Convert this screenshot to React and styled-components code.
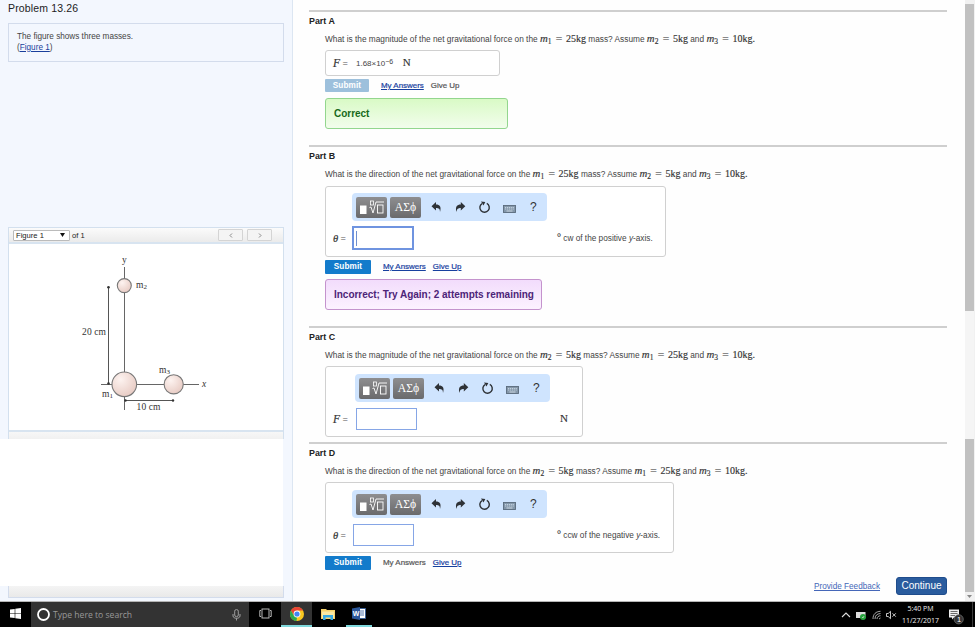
import React from "react";
import styled, { createGlobalStyle } from "styled-components";

const GlobalStyle = createGlobalStyle`
  * {
    box-sizing: border-box;
  }

  body {
    margin: 0;
    overflow: hidden;
    background: white;
    font-family: "Liberation Sans", Arial, sans-serif;
    color: #444;
  }
`

const Screen = styled.div`
  display: flex;
  flex-direction: column;
  width: 975px;
  height: 627px;
`

const Page = styled.div`
  display: flex;
  height: 602px;
  border-bottom: 1px solid #b5b5b5;
`

const Sidebar = styled.div`
  display: flex;
  flex-direction: column;
  width: 293px;
  background: #f3f7fe;
  border-right: 1px solid #dce6f2;
`

const ProblemTitle = styled.div`
  height: 23px;
  padding-left: 8px;
  font-size: 10.5px;
  line-height: 16px;
  letter-spacing: 0.15px;
  color: #222;
`

const Intro = styled.div`
  width: 276px;
  height: 39px;
  margin-left: 8px;
  padding: 8px 0 0 8px;
  border: 1px solid #d3dcec;
  font-size: 8.2px;
  line-height: 10.5px;
`

const Link = styled.a`
  color: ${props => props.$color || "#1a3f9c"};
  text-decoration: underline;
`

const Figure = styled.div`
  width: 276px;
  height: 212px;
  margin: 165px 0 0 8px;
  border: 1px solid #d3e0ee;
  border-bottom: none;
  background: white;
`

const FigureBar = styled.div`
  display: flex;
  align-items: center;
  height: 16px;
  padding-left: 4px;
  border-bottom: 2px solid #d8e4f0;
  background: linear-gradient(#fbfbfb, #ebebeb);
  font-size: 7.6px;
  color: #222;
`

const FigureSelect = styled.div`
  display: flex;
  justify-content: space-between;
  align-items: center;
  width: 57px;
  height: 11px;
  margin-right: 2px;
  padding: 0 4px 0 2px;
  border: 1px solid #bbb;
  border-radius: 1px;
  background: white;
`

const Pager = styled.div`
  display: flex;
  gap: 4px;
  margin-left: auto;
  margin-right: 11px;
`

const PageButton = styled.div`
  display: flex;
  justify-content: center;
  align-items: center;
  width: 25px;
  height: 12px;
  border: 1px solid #d4d4d4;
  border-radius: 1px;
  background: #f4f4f4;
`

const FigureFoot = styled.div`
  height: 14px;
  border-top: 2px solid #d8e4f0;
  background: linear-gradient(#f7f7f7, #ececec);
`

const Blank = styled.div`
  width: 283px;
  height: 147px;
  background: white;
`

const LowerFoot = styled.div`
  width: 276px;
  height: 12px;
  margin-left: 8px;
  border: 1px solid #d3dcec;
  border-top: none;
  background: linear-gradient(#f4f4f4, #e9e9e9);
`

const Content = styled.div`
  flex: 1;
  padding: 10px 18px 0 16px;
  background: #fefefe;
`

const Part = styled.div`
  height: ${props => props.$height}px;
  border-top: 2px solid #cfcfcf;
`

const PartTitle = styled.div`
  height: 18px;
  font-size: 8.9px;
  font-weight: bold;
  line-height: 19px;
  color: #222;
`

const PartBody = styled.div`
  padding-left: 16px;
`

const Question = styled.div`
  height: ${props => props.$height}px;
  font-size: 8.3px;
  line-height: 18px;
  white-space: nowrap;
`

const Math = styled.span`
  font-family: "Liberation Serif", "Times New Roman", serif;
  font-size: ${props => props.$size || 10}px;
  line-height: 0;
  color: #333;
  -webkit-text-stroke: 0.15px currentColor;

  i {
    font-size: 10.8px;
  }

  sub {
    font-size: 7.5px;
    line-height: 0;
    vertical-align: -1.5px;
  }
`

const Equals = styled.span`
  margin: 0 3.7px 0 1.8px;
  font-size: 11.5px;
  line-height: 0;
  vertical-align: -1px;
  color: #777;
`

const AnswerBox = styled.div`
  width: ${props => props.$width}px;
  height: ${props => props.$height || 71}px;
  padding: ${props => props.$top}px 0 0 7px;
  border: 1px solid #d0d0d0;
  border-radius: 3px;
  background: white;
`

const GivenAnswer = styled.div`
  display: flex;
  align-items: center;
  height: 24px;
  font-size: 8px;

  sup {
    font-size: 7px;
    line-height: 0;
    vertical-align: 2.5px;
  }
`

const Toolbar = styled.div`
  display: flex;
  align-items: center;
  width: 195px;
  height: 28px;
  margin-left: ${props => props.$indent}px;
  padding-left: 4px;
  border-radius: 4px;
  background: #cfe4fe;
`

const ToolButton = styled.div`
  display: flex;
  justify-content: center;
  align-items: center;
  width: 31px;
  height: 21px;
  margin-right: 3px;
  border-radius: 2px;
  background: linear-gradient(#8e8e90, #6a6a6c);
  font-family: "Liberation Serif", serif;
  font-size: 11.7px;
  color: white;
`

const Tools = styled.svg`
  width: 123px;
  height: 28px;
  font-family: "Liberation Sans", sans-serif;
`

const InputRow = styled.div`
  display: flex;
  align-items: center;
  height: 24px;
  margin-top: 5px;
`

const Variable = styled.div`
  width: ${props => props.$width}px;
  font-family: "Liberation Serif", serif;
  font-size: 9.5px;
  white-space: nowrap;
  color: #555;

  i {
    font-size: ${props => props.$large ? 11.5 : 10.5}px;
    color: #333;
    -webkit-text-stroke: 0.2px currentColor;
  }
`

const Field = styled.div`
  width: ${props => props.$active ? 62 : 61}px;
  height: ${props => props.$active ? 24 : 22}px;
  padding: 3px 2px;
  border: ${props => props.$active ? "2px solid #6f94e0" : "1px solid #86a6e6"};
  background: white;
`

const Caret = styled.div`
  width: 1px;
  height: 15px;
  background: #6f8fd0;
`

const Unit = styled.div`
  margin-left: ${props => props.$gap}px;
  font-size: 8.25px;
  white-space: nowrap;
`

const Actions = styled.div`
  display: flex;
  align-items: center;
  height: 15px;
  margin-top: 2px;
  font-size: 7.95px;
  white-space: nowrap;
`

const Submit = styled.div`
  display: flex;
  justify-content: center;
  align-items: center;
  width: ${props => props.$done ? 44 : 46}px;
  height: ${props => props.$done ? 13 : 14}px;
  margin-right: 12px;
  border-radius: 1px;
  background: ${props => props.$done ? "#9dc0dc" : "#137bcb"};
  font-size: 8.2px;
  font-weight: bold;
  letter-spacing: 0.1px;
  color: white;
`

const Action = styled.span`
  margin-right: 7px;
  -webkit-text-stroke: 0.2px currentColor;
  color: ${props => props.$link ? "#17409f" : "#555"};
  text-decoration: ${props => props.$link ? "underline" : "none"};
`

const Feedback = styled.div`
  width: ${props => props.$width}px;
  height: 31px;
  margin-top: 5px;
  padding-left: 8px;
  border: 1px solid ${props => props.$correct ? "#93d68e" : "#c493cd"};
  border-radius: 3px;
  background: ${props => props.$correct
    ? "linear-gradient(#d9fac6, #f2fdec)"
    : "linear-gradient(#f2dcfc, #fcf2ff)"};
  font-size: 10px;
  font-weight: bold;
  line-height: 29px;
  letter-spacing: -0.02px;
  white-space: nowrap;
  color: ${props => props.$correct ? "#17691a" : "#4d2478"};
`

const Footer = styled.div`
  display: flex;
  justify-content: flex-end;
  align-items: center;
  height: 18px;
  margin-top: 6px;
  font-size: 8.2px;
`

const Continue = styled.div`
  width: 51px;
  height: 18px;
  margin-left: 16px;
  border: 1px solid #1f4c8c;
  border-radius: 3px;
  background: #2a5c9e;
  font-size: 10px;
  line-height: 16px;
  text-align: center;
  color: white;
`

const Scrollbar = styled.div`
  display: flex;
  flex-direction: column;
  width: 10px;
  padding-top: 4px;
  background: #f1f1f1;
`

const Thumb = styled.div`
  width: 9px;
  height: ${props => props.$height}px;
  background: ${props => props.$light ? "#f5f5f5" : "#c1c1c1"};
`

const Taskbar = styled.div`
  display: flex;
  height: 25px;
  background: black;
  color: #ddd;
  font-family: "Open Sans", "Noto Sans", sans-serif;
`

const Slot = styled.div`
  display: flex;
  justify-content: center;
  align-items: center;
  width: ${props => props.$width}px;
  border-bottom: 2px solid ${props => props.$open ? "#7fd8dc" : "transparent"};
  background: ${props => props.$active ? "#333" : "black"};
  background-clip: padding-box;
`

const Search = styled.div`
  display: flex;
  align-items: center;
  width: 218px;
  padding: 0 8px 0 6px;
  background: #333;
  font-size: 8.6px;
  color: #999;

  span {
    flex: 1;
    margin-left: 3px;
  }
`

const Tray = styled.div`
  display: flex;
  align-items: center;
  margin-left: auto;
`

const Clock = styled.div`
  width: 48px;
  padding-right: 1px;
  font-size: 7px;
  line-height: 11.5px;
  text-align: center;
  white-space: nowrap;
  color: #eee;
`

const Mass = ({ index, value }) => (
    <Math>
        <i>m</i><sub>{index}</sub> <Equals>=</Equals>{value}kg
    </Math>
)

const Prompt = ({ kind, first, second, height = 20 }) => (
    <Question $height={height}>
        What is the {kind} of the net gravitational force on the <Mass {...first}/> mass? Assume{" "}
        <Mass {...second}/> and <Mass index="3" value="10"/><Math>.</Math>
    </Question>
)

const EquationTools = ({ indent }) => (
    <Toolbar $indent={indent}>
        <ToolButton>
            <svg width="25" height="17" fill="none" stroke="white">
                <rect x="1" y="6.5" width="6.5" height="8.5" fill="white" stroke="none"/>
                <rect x="11.5" y="2" width="3" height="4" strokeWidth="0.8"/>
                <path d="M10.5 8.5 L12 8 L14 14 L17 3 H25" strokeWidth="0.9"/>
                <rect x="18.5" y="6" width="5.5" height="8" strokeWidth="0.9"/>
            </svg>
        </ToolButton>
        <ToolButton>ΑΣϕ</ToolButton>
        <Tools viewBox="0 0 123 28">
            <path d="M7.5 13.3 L12 9 V11.6 C15.8 11.6 17.6 14 16 19 C16 15.7 14.8 15 12 15 V17.5 Z" fill="#2e3237"/>
            <path d="M41.3 13.3 L36.8 9 V11.6 C33 11.6 31 14 32.5 19 C33 15.7 34 15 36.8 15 V17.5 Z" fill="#2e3237"/>
            <path d="M62.8 10.4 A4.7 4.7 0 1 1 58 10.6" fill="none" stroke="#2e3237" strokeWidth="1.4"/>
            <path d="M57 8.6 L61.3 9 L59.5 12.6 Z" fill="#2e3237"/>
            <rect x="79.5" y="12.5" width="12" height="7" fill="#8497aa" stroke="#5a6b7c" strokeWidth="0.9"/>
            <path d="M81 14.5 H90 M81 16 H90" stroke="#dde9f5" strokeWidth="0.7" strokeDasharray="1.2 0.7"/>
            <path d="M82.5 18 H88.5" stroke="#e8f0f8" strokeWidth="0.7"/>
            <text x="106" y="18" fontSize="12" fill="#333">?</text>
        </Tools>
    </Toolbar>
)

const FigureDrawing = () => (
    <svg width="274" height="182" viewBox="9 244 274 182" fontFamily="Liberation Serif, serif" fontSize="9.5" fill="#333">
        <defs>
            <radialGradient id="ball" cx="0.35" cy="0.3" r="0.8">
                <stop offset="0" stopColor="#fdf3f0"/>
                <stop offset="1" stopColor="#e6c8c0"/>
            </radialGradient>
        </defs>
        <g stroke="#666" strokeWidth="1">
            <path d="M124.5 267 V410 M101 384.5 H199"/>
            <path d="M108.5 288 V383 M125 400.5 H172" stroke="#555"/>
        </g>
        <g fill="#333">
            <circle cx="108.5" cy="287.3" r="1.3"/>
            <circle cx="108.5" cy="383.5" r="1.3"/>
            <circle cx="125.5" cy="400.5" r="1.2"/>
            <circle cx="173" cy="400.5" r="1.2"/>
        </g>
        <g fill="url(#ball)" stroke="#777" strokeWidth="1.1">
            <circle cx="124.3" cy="285.6" r="7"/>
            <circle cx="124.3" cy="384.3" r="12.3"/>
            <circle cx="173.7" cy="384.3" r="9.6"/>
        </g>
        <text x="122" y="263">y</text>
        <text x="202" y="387" fontStyle="italic">x</text>
        <text x="136" y="287.5">m<tspan fontSize="7" dy="1">2</tspan></text>
        <text x="159" y="372.5">m<tspan fontSize="7" dy="1">3</tspan></text>
        <text x="102" y="397">m<tspan fontSize="7" dy="1">1</tspan></text>
        <text x="82" y="335" textLength="24">20 cm</text>
        <text x="136.5" y="410" textLength="24">10 cm</text>
    </svg>
)

const Windows = () => (
    <svg width="11" height="11" viewBox="0 0 11 11" fill="white">
        <path d="M0 1.6 L4.7 0.9 V5.2 H0 Z M5.3 0.8 L11 0 V5.2 H5.3 Z M0 5.8 H4.7 V10.1 L0 9.4 Z M5.3 5.8 H11 V11 L5.3 10.2 Z"/>
    </svg>
)

const Chrome = () => (
    <svg width="14" height="14" viewBox="0 0 14 14">
        <circle cx="7" cy="7" r="7" fill="#fbc920"/>
        <path d="M0.9 3.5 A7 7 0 0 1 13.1 3.5 H7 L4 8.7 Z" fill="#e84436"/>
        <path d="M0.9 3.5 L4 8.7 L7 10.5 L6.5 14 A7 7 0 0 1 0.9 3.5 Z" fill="#2da94f"/>
        <circle cx="7" cy="7" r="3.4" fill="white"/>
        <circle cx="7" cy="7" r="2.6" fill="#4285f4"/>
    </svg>
)

const Folder = () => (
    <svg width="14" height="12" viewBox="0 0 14 12">
        <path d="M0 1 H5 L6 2 H14 V11 H0 Z" fill="#f6d26a"/>
        <path d="M1 3.5 H13 V10 H1 Z" fill="#fbe9a3"/>
        <path d="M2 12 V7 H12 V12 H9.5 V9.5 H4.5 V12 Z" fill="#38a9e0"/>
    </svg>
)

const Word = () => (
    <svg width="14" height="13" viewBox="0 0 14 13">
        <rect x="7" y="1.5" width="6.5" height="10" fill="white" stroke="#2b579a" strokeWidth="0.8"/>
        <path d="M8 4 H12 M8 6 H12 M8 8 H12" stroke="#2b579a" strokeWidth="0.8"/>
        <path d="M0 1.5 L8 0 V13 L0 11.5 Z" fill="#2b579a"/>
        <text x="0.8" y="9" fontSize="7" fontWeight="bold" fontFamily="Liberation Sans" fill="white">W</text>
    </svg>
)

const TrayIcons = () => (
    <svg width="56" height="25" viewBox="0 0 56 25" fill="none" stroke="#ddd">
        <path d="M1 15 L5 11 L9 15" strokeWidth="1.1"/>
        <rect x="15.5" y="10.5" width="8.5" height="5" fill="#ddd"/>
        <circle cx="22" cy="15" r="3" fill="#26a33c" stroke="none"/>
        <path d="M21 15 L22 16 L23 14" strokeWidth="0.7"/>
        <path d="M32 17 C32 12 35 9.5 39.5 9.3 M34 17 C34 13.5 36 11.8 39.5 11.5 M36 17 C36 15 37.5 13.8 39.5 13.7 M38 17 L39.5 16" stroke="#bbb" strokeWidth="0.9"/>
        <path d="M45.5 11.5 H47.2 L49.5 9.3 V16.7 L47.2 14.5 H45.5 Z" strokeWidth="0.9"/>
        <path d="M51.5 11.3 L54.8 14.7 M54.8 11.3 L51.5 14.7" strokeWidth="0.9"/>
    </svg>
)

const Notifications = () => (
    <svg width="30" height="25" viewBox="0 0 30 25">
        <path d="M4 7.5 H14 V15.5 H9 L7 17.5 V15.5 H4 Z" fill="#eee"/>
        <path d="M5.5 9.5 H12.5 M5.5 11.5 H12.5 M5.5 13.5 H10" stroke="#333" strokeWidth="0.7"/>
        <circle cx="13.7" cy="17.3" r="4.6" fill="#333" stroke="#777" strokeWidth="0.7"/>
        <text x="12" y="20" fontSize="7.5" fill="white" fontFamily="Liberation Sans">1</text>
        <path d="M27.5 0 V25" stroke="#555" strokeWidth="0.7"/>
    </svg>
)

class App extends React.Component {
    render() {
        return (
            <Screen>
                <GlobalStyle/>
                <Page>
                    <Sidebar>
                        <ProblemTitle>Problem 13.26</ProblemTitle>
                        <Intro>
                            The figure shows three masses.<br/>
                            (<Link>Figure 1</Link>)
                        </Intro>
                        <Figure>
                            <FigureBar>
                                <FigureSelect>
                                    Figure 1
                                    <svg width="5" height="4"><path d="M0 0 H5 L2.5 4 Z" fill="#111"/></svg>
                                </FigureSelect>
                                of 1
                                <Pager>
                                    <PageButton>
                                        <svg width="4" height="5"><path d="M3 0.5 L1 2.5 L3 4.5" fill="none" stroke="#888"/></svg>
                                    </PageButton>
                                    <PageButton>
                                        <svg width="4" height="5"><path d="M1 0.5 L3 2.5 L1 4.5" fill="none" stroke="#888"/></svg>
                                    </PageButton>
                                </Pager>
                            </FigureBar>
                            <FigureDrawing/>
                            <FigureFoot/>
                        </Figure>
                        <Blank/>
                        <LowerFoot/>
                    </Sidebar>
                    <Content>
                        <Part $height={135}>
                            <PartTitle>Part A</PartTitle>
                            <PartBody>
                                <Prompt kind="magnitude" first={{ index: 1, value: 25 }} second={{ index: 2, value: 5 }}/>
                                <AnswerBox $width={175} $height={26} $top={0}>
                                    <GivenAnswer>
                                        <Variable $large $width={23}><i>F</i> =</Variable>
                                        <span>1.68×10<sup>−6</sup></span>
                                        <Unit $gap={9.5}><Math $size={11}>N</Math></Unit>
                                    </GivenAnswer>
                                </AnswerBox>
                                <Actions>
                                    <Submit $done>Submit</Submit>
                                    <Action $link>My Answers</Action>
                                    <Action>Give Up</Action>
                                </Actions>
                                <Feedback $correct $width={183}>Correct</Feedback>
                            </PartBody>
                        </Part>
                        <Part $height={181}>
                            <PartTitle>Part B</PartTitle>
                            <PartBody>
                                <Prompt height={21} kind="direction" first={{ index: 1, value: 25 }} second={{ index: 2, value: 5 }}/>
                                <AnswerBox $width={341} $top={6}>
                                    <EquationTools indent={19}/>
                                    <InputRow>
                                        <Variable $width={19}><i>θ</i> =</Variable>
                                        <Field $active><Caret/></Field>
                                        <Unit $gap={143}><Math>°</Math> cw of the positive <i>y</i>-axis.</Unit>
                                    </InputRow>
                                </AnswerBox>
                                <Actions>
                                    <Submit>Submit</Submit>
                                    <Action $link>My Answers</Action>
                                    <Action $link>Give Up</Action>
                                </Actions>
                                <Feedback $width={217}>Incorrect; Try Again; 2 attempts remaining</Feedback>
                            </PartBody>
                        </Part>
                        <Part $height={116}>
                            <PartTitle>Part C</PartTitle>
                            <PartBody>
                                <Prompt kind="magnitude" first={{ index: 2, value: 5 }} second={{ index: 1, value: 25 }}/>
                                <AnswerBox $width={258} $top={7}>
                                    <EquationTools indent={22}/>
                                    <InputRow>
                                        <Variable $large $width={23}><i>F</i> =</Variable>
                                        <Field/>
                                        <Unit $gap={143}><Math $size={11}>N</Math></Unit>
                                    </InputRow>
                                </AnswerBox>
                            </PartBody>
                        </Part>
                        <Part $height={129}>
                            <PartTitle>Part D</PartTitle>
                            <PartBody>
                                <Prompt kind="direction" first={{ index: 2, value: 5 }} second={{ index: 1, value: 25 }}/>
                                <AnswerBox $width={349} $top={7}>
                                    <EquationTools indent={19}/>
                                    <InputRow>
                                        <Variable $width={20}><i>θ</i> =</Variable>
                                        <Field/>
                                        <Unit $gap={143}><Math>°</Math> ccw of the negative <i>y</i>-axis.</Unit>
                                    </InputRow>
                                </AnswerBox>
                                <Actions>
                                    <Submit>Submit</Submit>
                                    <Action>My Answers</Action>
                                    <Action $link>Give Up</Action>
                                </Actions>
                            </PartBody>
                        </Part>
                        <Footer>
                            <Link $color="#4466b8">Provide Feedback</Link>
                            <Continue>Continue</Continue>
                        </Footer>
                    </Content>
                    <Scrollbar>
                        <Thumb $height={307}/>
                        <Thumb $light $height={128}/>
                        <Thumb $height={153}/>
                        <svg width="9" height="9"><path d="M2 3 H7 L4.5 6 Z" fill="#888"/></svg>
                    </Scrollbar>
                </Page>
                <Taskbar>
                    <Slot $width={31}><Windows/></Slot>
                    <Search>
                        <svg width="13" height="13"><circle cx="6.5" cy="6.5" r="5.5" fill="none" stroke="white" strokeWidth="1.8"/></svg>
                        <span>Type here to search</span>
                        <svg width="9" height="12" fill="none" stroke="#aaa" strokeWidth="0.9">
                            <rect x="2.7" y="0.6" width="3.6" height="7" rx="1.6"/>
                            <path d="M1 5 V7 C1 10 8 10 8 7 V5 M4.5 9.3 V11.5"/>
                        </svg>
                    </Search>
                    <Slot $width={32}>
                        <svg width="13" height="11" fill="none" stroke="#ccc" strokeWidth="0.9">
                            <rect x="3" y="1" width="7" height="9"/>
                            <path d="M2 2.5 H0.8 V8.5 H2 M11 2.5 H12.2 V8.5 H11"/>
                        </svg>
                    </Slot>
                    <Slot $width={31} $active $open><Chrome/></Slot>
                    <Slot $width={32}><Folder/></Slot>
                    <Slot $width={2}/>
                    <Slot $width={26} $open><Word/></Slot>
                    <Tray>
                        <TrayIcons/>
                        <Clock>5:40 PM<br/>11/27/2017</Clock>
                        <Notifications/>
                    </Tray>
                </Taskbar>
            </Screen>
        );
    }
}

export default App;
